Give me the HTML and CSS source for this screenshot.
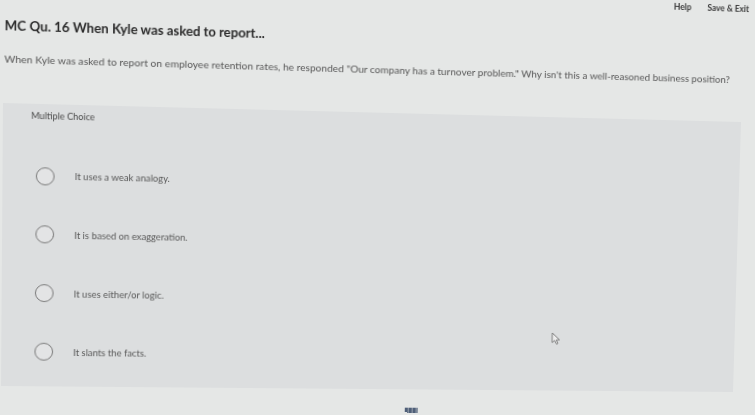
FILE: index.html
```html
<!DOCTYPE html>
<html>
<head>
<meta charset="utf-8">
<link rel="stylesheet" href="styles.css">
</head>
<body>
<div class="page">
  <header class="topbar">
    <span class="link">Help</span>
    <span class="link">Save &amp; Exit</span>
  </header>
  <h1 class="title">MC Qu. 16 When Kyle was asked to report...</h1>
  <p class="question">When Kyle was asked to report on employee retention rates, he responded "Our company has a turnover problem." Why isn't this a well-reasoned business position?</p>
  <section class="panel">
    <div class="kind">Multiple Choice</div>
    <ul class="options">
      <li class="option"><span class="radio"></span><span class="label">It uses a weak analogy.</span></li>
      <li class="option"><span class="radio"></span><span class="label">It is based on exaggeration.</span></li>
      <li class="option"><span class="radio"></span><span class="label">It uses either/or logic.</span></li>
      <li class="option"><span class="radio"></span><span class="label">It slants the facts.</span></li>
    </ul>
    <svg class="cursor" width="10" height="14" viewBox="0 0 10 14"><path d="M1 1 L1 11 L3.5 8.8 L5.5 12.5 L7 11.8 L5.2 8.2 L8.5 8 Z" fill="#eeeeee" stroke="#6f6f6f" stroke-width="0.9"/></svg>
  </section>
  <footer class="footer"><span class="grid-icon"></span></footer>
</div>
</body>
</html>
```
FILE: styles.css
```css
html {
  margin: 0;
  padding: 0;
  height: 415px;
  overflow: hidden;
  background: #e5e7e6;
}
body {
  margin: 0;
  padding: 0;
  width: 755px;
  height: 415px;
  overflow: hidden;
  background: #e5e7e6;
  font-family: Lato, "Open Sans", sans-serif;
  color: #444;
}
.page {
  width: 755px;
  height: 430px;
  overflow: hidden;
  background: #e5e7e6;
  transform-origin: 0 0;
  transform: matrix3d(1.051693, 0.033786, 0, 0.0000652, -0.0070601, 1.015315, 0, 0.00003092, 0, 0, 1, 0, 0.723455, -21.6369, 0, 0.9993816);
}
.topbar {
  display: flex;
  justify-content: flex-end;
  gap: 16.5px;
  padding: 0 9px 0 0;
  height: 12px;
  line-height: 12px;
  font-size: 8.7px;
  font-weight: 700;
  color: #3a3a3a;
}
.title {
  margin: 25.7px 0 0 4px;
  font-size: 12.8px;
  font-weight: 700;
  color: #2b2b2b;
  line-height: 16px;
}
.question {
  margin: 19.7px 0 0 4px;
  font-size: 10.1px;
  line-height: 12px;
  color: #575757;
}
.panel {
  position: relative;
  margin: 37.6px 0 0 3px;
  width: 738px;
  height: 283px;
  box-sizing: border-box;
  background: #dcdedf;
  padding: 7.5px 0 0 26.9px;
}
.kind {
  font-size: 8.85px;
  color: #4a4a4a;
  line-height: 10px;
}
.options {
  list-style: none;
  margin: 45.1px 0 0 5.1px;
  padding: 0;
  display: flex;
  flex-direction: column;
  gap: 40.9px;
}
.option {
  display: flex;
  align-items: center;
  gap: 19.5px;
  height: 18px;
}
.radio {
  width: 18px;
  height: 18px;
  border: 1.3px solid #7b7b7b;
  border-radius: 50%;
  background: #e3e4e5;
  box-sizing: border-box;
}
.label {
  font-size: 9.25px;
  color: #585858;
}
.cursor {
  position: absolute;
  left: 547px;
  top: 222px;
}
.footer {
  padding: 19px 0 0 402px;
}
.grid-icon {
  display: block;
  width: 13px;
  height: 5px;
  background: repeating-linear-gradient(90deg, #4f5f78 0 3px, #9aa3b0 3px 4px);
}
```
